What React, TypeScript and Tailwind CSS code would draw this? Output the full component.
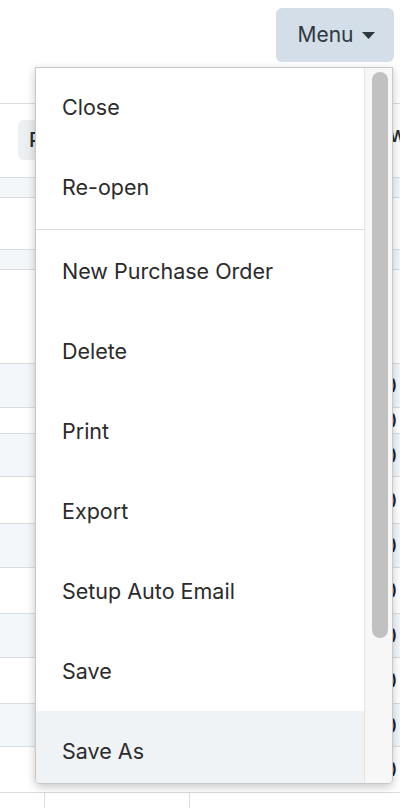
import { useState } from 'react';

type Row = { h: string; tint?: boolean };

// background grid rows behind the open menu
const rows: Row[] = [
  { h: 'h-[20px]', tint: true },
  { h: 'h-[52px]' },
  { h: 'h-[20px]', tint: true },
  { h: 'h-[94px]' },
  { h: 'h-[44px]', tint: true },
  { h: 'h-[26px]' },
  { h: 'h-[43px]', tint: true },
  { h: 'h-[47px]' },
  { h: 'h-[44px]', tint: true },
  { h: 'h-[46px]' },
  { h: 'h-[44px]', tint: true },
  { h: 'h-[46px]' },
  { h: 'h-[43px]', tint: true },
  { h: 'h-[46px]' },
];

const topItems = ['Close', 'Re-open'];
const mainItems = ['New Purchase Order', 'Delete', 'Print', 'Export', 'Setup Auto Email', 'Save', 'Save As'];

function MenuItem({ label, active }: { label: string; active?: boolean }) {
  return (
    <div
      className={
        'flex h-[80px] shrink-0 items-center pl-[26px] text-[21.5px] text-[#2b2b2b] ' +
        (active ? 'bg-[#f0f3f6]' : 'bg-white')
      }
    >
      {label}
    </div>
  );
}

export default function App() {
  const [open, setOpen] = useState(true);

  return (
    <div className="relative h-[808px] w-[400px] overflow-hidden bg-white font-['Inter',sans-serif]">
      {/* toolbar */}
      <div className="flex h-[103px] items-start justify-end pr-[6px] pt-[8px]">
        <button
          onClick={() => setOpen(!open)}
          className="flex h-[54px] w-[118px] items-center justify-center gap-[8px] rounded-[6px] bg-[#d3dee8] pl-[2px] text-[21px] text-[#303741]"
        >
          <span>Menu</span>
          <svg width="13" height="7" viewBox="0 0 13 7">
            <path d="M0 0h13L6.5 7z" fill="#303741" />
          </svg>
        </button>
      </div>

      {/* grid */}
      <div className="border-t border-[#d9dde1]">
        <div className="flex h-[74px] items-start justify-between border-b border-[#d9dde1] pt-[16px]">
          <div className="ml-[18px] flex h-[40px] items-center rounded-[6px] bg-[#eceff2] px-[11px] text-[20px] font-medium text-[#2b2b2b]">
            PO Number
          </div>
          <div className="mr-[-6px] pt-[4px] text-[16px] font-semibold text-[#2b2b2b]">W</div>
        </div>
        {rows.map((r, i) => (
          <div
            key={i}
            className={
              'flex items-center justify-end border-b border-[#d9dde1] pr-[3px] text-[15px] font-bold text-[#222] ' +
              r.h +
              ' ' +
              (r.tint ? 'bg-[#f4f7fa]' : 'bg-white')
            }
          >
            {i > 3 ? ')' : ''}
          </div>
        ))}
        <div className="flex h-[20px]">
          <div className="w-[45px] border-r border-[#d9dde1]" />
          <div className="w-[145px] border-r border-[#d9dde1]" />
        </div>
      </div>

      {/* dropdown */}
      {open && (
        <div className="absolute left-[35px] top-[67px] flex h-[717px] w-[358px] overflow-hidden rounded-b-[5px] border border-[#c8c8c8] bg-white shadow-[0_3px_10px_rgba(0,0,0,0.22)]">
          <div className="flex flex-1 flex-col overflow-hidden">
            <div className="-mt-[1px] flex flex-col">
              {topItems.map((t) => (
                <MenuItem key={t} label={t} />
              ))}
              <div className="flex h-[4px] shrink-0 items-center">
                <div className="h-px w-full bg-[#dcdcdc]" />
              </div>
              {mainItems.map((t) => (
                <MenuItem key={t} label={t} active={t === 'Save As'} />
              ))}
            </div>
          </div>
          <div className="w-[28px] shrink-0 border-l border-[#e4e4e4] bg-[#f7f7f7] pl-[7px] pt-[4px]">
            <div className="h-[566px] w-[16px] rounded-full bg-[#c1c1c1]" />
          </div>
        </div>
      )}
    </div>
  );
}
